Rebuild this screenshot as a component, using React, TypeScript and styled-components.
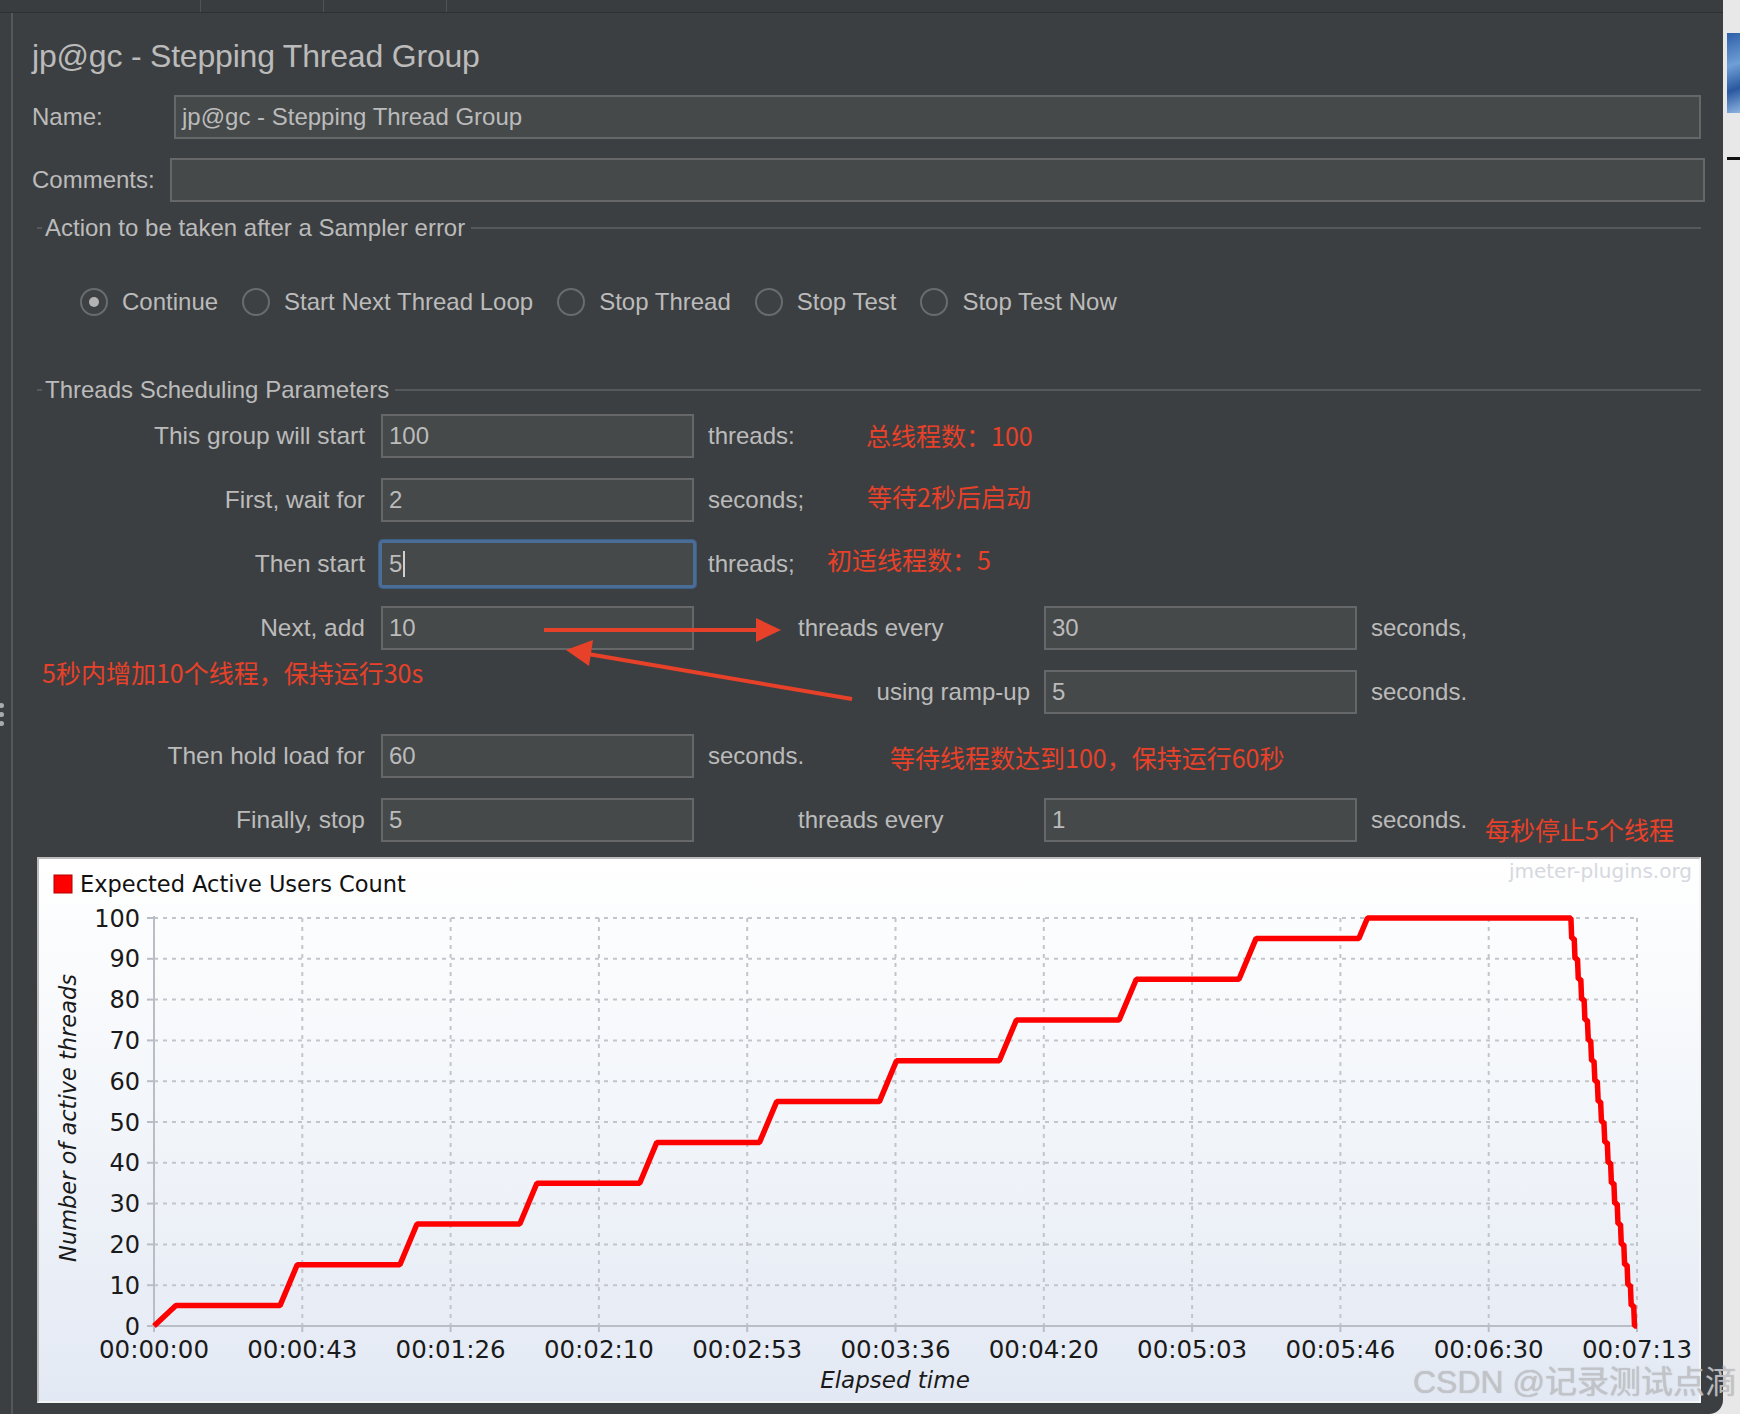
import React from 'react';
import styled, { createGlobalStyle } from 'styled-components';

const GlobalStyle = createGlobalStyle`
  html, body {
    margin: 0;
    padding: 0;
    background: #e8e8e8;
  }
  body {
    font-family: "Liberation Sans", Arial, "Noto Sans CJK SC", sans-serif;
  }
`;

const TEXT = '#bbbbbb';
const RED = '#e8412a';

// ---------- chart geometry (inside the chart panel border) ----------
const X0 = 115;
const X1 = 1598;
const Y0 = 467;
const Y100 = 59;
const T_END = 433;
const tx = (t: number) => X0 + (t / T_END) * (X1 - X0);
const vy = (v: number) => Y0 - (v / 100) * (Y0 - Y100);

const xLabels = [
  '00:00:00', '00:00:43', '00:01:26', '00:02:10', '00:02:53', '00:03:36',
  '00:04:20', '00:05:03', '00:05:46', '00:06:30', '00:07:13',
];

const buildSeries = () => {
  const pts: [number, number][] = [[0, 0], [6.4, 5]];
  let v = 5;
  for (let k = 0; k < 9; k++) {
    const s = 36.8 + 35 * k;
    pts.push([s, v]);
    v += 10;
    pts.push([s + 5, v]);
  }
  pts.push([351.8, 95], [354.3, 100], [413.7, 100]);
  const dt = (433 - 413.7) / 20;
  for (let i = 0; i < 20; i++) {
    const t = 413.7 + i * dt;
    pts.push([t, 100 - 5 * i], [t + dt * 0.25, 100 - 5 * (i + 1)]);
  }
  pts.push([433, 0]);
  return pts.map(([t, val]) => `${tx(t).toFixed(1)},${vy(val).toFixed(1)}`).join(' ');
};

// ---------- layout ----------
const Page = styled.div`
  position: relative;
  width: 1740px;
  height: 1414px;
  display: flex;
  overflow: hidden;
  background: #e8e8e8;
`;

const DarkWindow = styled.div`
  width: 1723px;
  display: flex;
  flex-direction: column;
  background: #3c3f41;
  border-bottom-right-radius: 14px;
`;

const TopBar = styled.div`
  height: 12px;
  display: flex;
  background: #3a3d40;
  border-bottom: 1px solid #2e3033;
`;

const Tab = styled.div<{ $w: number }>`
  width: ${(p) => p.$w}px;
  border-right: 1px solid #505356;
`;

const Body = styled.div`
  flex: 1;
  display: flex;
`;

const LeftStrip = styled.div`
  width: 11px;
  border-right: 2px solid #55585b;
  display: flex;
  flex-direction: column;
  align-items: flex-start;
`;

const Handle = styled.div`
  margin-top: 690px;
  margin-left: -1px;
  display: flex;
  flex-direction: column;
  gap: 4px;
  span {
    width: 5px;
    height: 5px;
    border-radius: 50%;
    background: #a9abae;
  }
`;

const Content = styled.div`
  flex: 1;
  display: flex;
  flex-direction: column;
  padding: 24px 22px 0 19px;
  color: ${TEXT};
  font-size: 24px;
`;

const Title = styled.div`
  font-size: 32px;
  line-height: 38px;
  height: 38px;
  letter-spacing: -0.2px;
`;

const FieldRow = styled.div<{ $gap: number; $labelW: number; $overhang?: number }>`
  display: flex;
  align-items: center;
  margin-top: ${(p) => p.$gap}px;
  margin-right: ${(p) => -(p.$overhang ?? 0)}px;
  & > label {
    width: ${(p) => p.$labelW}px;
    flex: none;
  }
`;

const Field = styled.div<{ $focused?: boolean }>`
  box-sizing: border-box;
  height: 44px;
  flex: 1;
  display: flex;
  align-items: center;
  padding-left: 6px;
  background: #45494a;
  border: 2px solid #656769;
  color: ${TEXT};
  font-size: 24px;
  white-space: nowrap;
  ${(p) =>
    p.$focused &&
    `
    margin: -2px;
    height: 48px;
    border: 3px solid #4a6d97;
    border-radius: 4px;
    box-shadow: 0 0 0 1px #3f5f85;
    padding-left: 7px;
  `}
`;

const Caret = styled.span`
  display: inline-block;
  width: 2px;
  height: 26px;
  margin-left: 1px;
  background: #d0d0d0;
`;

const SectionTitle = styled.div<{ $gap: number }>`
  display: flex;
  align-items: center;
  margin-top: ${(p) => p.$gap}px;
  margin-left: 5px;
  line-height: 28px;
  height: 28px;
  &::before {
    content: '';
    width: 5px;
    height: 2px;
    margin-right: 3px;
    background: #56595c;
  }
  &::after {
    content: '';
    flex: 1;
    height: 2px;
    margin-left: 6px;
    background: #56595c;
  }
`;

const RadioGroup = styled.div`
  display: flex;
  align-items: center;
  gap: 24px;
  height: 30px;
  margin-top: 45px;
  padding-left: 48px;
`;

const RadioItem = styled.div`
  display: flex;
  align-items: center;
  gap: 14px;
`;

const RadioCircle = styled.span<{ $checked?: boolean }>`
  box-sizing: border-box;
  width: 28px;
  height: 28px;
  border-radius: 50%;
  border: 2px solid #696c6f;
  background: #3e4143;
  display: flex;
  align-items: center;
  justify-content: center;
  &::after {
    content: '';
    display: ${(p) => (p.$checked ? 'block' : 'none')};
    width: 10px;
    height: 10px;
    border-radius: 50%;
    background: #b3b3b3;
  }
`;

const ScheduleGrid = styled.div`
  display: grid;
  grid-template-columns: 349px 313px 104px 246px 313px auto;
  grid-auto-rows: 44px;
  row-gap: 20px;
  margin-top: 10px;
  align-items: center;
`;

const RowLabel = styled.div`
  text-align: right;
  padding-right: 16px;
  white-space: nowrap;
  font-size: 24.5px;
`;

const Unit = styled.div`
  padding-left: 14px;
  white-space: nowrap;
`;

const MidLabel = styled.div<{ $align: 'left' | 'right' }>`
  text-align: ${(p) => p.$align};
  padding-right: ${(p) => (p.$align === 'right' ? 14 : 0)}px;
  white-space: nowrap;
`;

const ChartPanel = styled.div`
  position: relative;
  flex: none;
  width: 1664px;
  height: 546px;
  margin-top: 15px;
  margin-left: 5px;
  box-sizing: border-box;
  border: 2px solid #bcbcbc;
  border-right-color: #f4f4f4;
  border-bottom-color: #f4f4f4;
  background: linear-gradient(180deg, #ffffff 0%, #f3f6fa 45%, #e3e9f4 100%);
  svg {
    display: block;
  }
`;

const RightStrip = styled.div`
  flex: 1;
  display: flex;
  flex-direction: column;
  padding-top: 33px;
  padding-left: 4px;
`;

const Thumb = styled.div`
  height: 80px;
  background: linear-gradient(160deg, #2d5fa8 0%, #6f9fd6 40%, #2a58a0 70%, #8cb4e0 100%);
`;

const StripRule = styled.div`
  margin-top: 44px;
  height: 3px;
  background: #111;
`;

const Note = styled.span<{ $x: number; $y: number }>`
  position: absolute;
  left: ${(p) => p.$x}px;
  top: ${(p) => p.$y - 16}px;
  line-height: 32px;
  font-family: "Noto Sans CJK SC", "Liberation Sans", sans-serif;
  font-size: 25px;
  color: ${RED};
  white-space: nowrap;
  pointer-events: none;
`;

const ArrowLayer = styled.svg`
  position: absolute;
  left: 0;
  top: 0;
  pointer-events: none;
`;

const Watermark = styled.span`
  position: absolute;
  right: 3px;
  bottom: 12px;
  font-family: "Liberation Sans", "Noto Sans CJK SC", sans-serif;
  font-size: 32px;
  color: rgba(196, 198, 202, 0.9);
  text-shadow: 0 0 1px rgba(120, 120, 120, 0.5);
  white-space: nowrap;
  pointer-events: none;
`;

const radios = ['Continue', 'Start Next Thread Loop', 'Stop Thread', 'Stop Test', 'Stop Test Now'];

type Row = {
  label?: string;
  value?: string;
  focused?: boolean;
  unit?: string;
  mid?: string;
  midAlign?: 'left' | 'right';
  value2?: string;
  unit2?: string;
};

const rows: Row[] = [
  { label: 'This group will start', value: '100', unit: 'threads:' },
  { label: 'First, wait for', value: '2', unit: 'seconds;' },
  { label: 'Then start', value: '5', focused: true, unit: 'threads;' },
  { label: 'Next, add', value: '10', mid: 'threads every', midAlign: 'left', value2: '30', unit2: 'seconds,' },
  { mid: 'using ramp-up', midAlign: 'right', value2: '5', unit2: 'seconds.' },
  { label: 'Then hold load for', value: '60', unit: 'seconds.' },
  { label: 'Finally, stop', value: '5', mid: 'threads every', midAlign: 'left', value2: '1', unit2: 'seconds.' },
];

const notes = [
  { x: 866, y: 435, text: '总线程数：100' },
  { x: 867, y: 496, text: '等待2秒后启动' },
  { x: 827, y: 559, text: '初适线程数：5' },
  { x: 42, y: 672, text: '5秒内增加10个线程，保持运行30s' },
  { x: 890, y: 757, text: '等待线程数达到100，保持运行60秒' },
  { x: 1485, y: 829, text: '每秒停止5个线程' },
];

const Chart = () => {
  const series = buildSeries();
  const chartFont = '"DejaVu Sans", Verdana, sans-serif';
  return (
    <svg width={1660} height={542} viewBox="0 0 1660 542">
      <rect x={15} y={16} width={18} height={18} fill="#ff0000" stroke="#b00000" strokeWidth={1} />
      <text x={41} y={33} fontFamily={chartFont} fontSize={22.5} fill="#111">
        Expected Active Users Count
      </text>
      <text x={1653} y={19} textAnchor="end" fontFamily={chartFont} fontSize={20} fill="#d5d8de">
        jmeter-plugins.org
      </text>

      {Array.from({ length: 10 }, (_, i) => (i + 1) * 10).map((v) => (
        <line key={`h${v}`} x1={X0} x2={X1} y1={vy(v)} y2={vy(v)} stroke="#c2c5cc" strokeWidth={2} strokeDasharray="4 5" />
      ))}
      {xLabels.map((_, i) =>
        i === 0 ? null : (
          <line
            key={`v${i}`}
            x1={tx(i * 43.3)}
            x2={tx(i * 43.3)}
            y1={Y100}
            y2={Y0}
            stroke="#c2c5cc"
            strokeWidth={2}
            strokeDasharray="4 5"
          />
        ),
      )}

      <line x1={X0} x2={X0} y1={Y100 - 2} y2={Y0} stroke="#b9bdc5" strokeWidth={2} />
      <line x1={X0} x2={X1} y1={Y0} y2={Y0} stroke="#b9bdc5" strokeWidth={2} />
      {Array.from({ length: 11 }, (_, i) => i * 10).map((v) => (
        <g key={`y${v}`}>
          <line x1={X0 - 7} x2={X0} y1={vy(v)} y2={vy(v)} stroke="#b9bdc5" strokeWidth={2} />
          <text x={101} y={vy(v) + 8.5} textAnchor="end" fontFamily={chartFont} fontSize={24} fill="#1a1a1a">
            {v}
          </text>
        </g>
      ))}
      {xLabels.map((l, i) => (
        <g key={l}>
          <line x1={tx(i * 43.3)} x2={tx(i * 43.3)} y1={Y0} y2={Y0 + 6} stroke="#b9bdc5" strokeWidth={2} />
          <text x={tx(i * 43.3)} y={499} textAnchor="middle" fontFamily={chartFont} fontSize={24.5} fill="#1a1a1a">
            {l}
          </text>
        </g>
      ))}
      <text x={856} y={529} textAnchor="middle" fontFamily={chartFont} fontStyle="italic" fontSize={23} fill="#1a1a1a">
        Elapsed time
      </text>
      <text
        x={0}
        y={0}
        transform="translate(37 259) rotate(-90)"
        textAnchor="middle"
        fontFamily={chartFont}
        fontStyle="italic"
        fontSize={22.5}
        fill="#1a1a1a"
      >
        Number of active threads
      </text>

      <polyline points={series} fill="none" stroke="#ff0000" strokeWidth={5.5} strokeLinejoin="bevel" />
    </svg>
  );
};

const App = () => {
  return (
    <Page>
      <GlobalStyle />
      <DarkWindow>
        <TopBar>
          <Tab $w={200} />
          <Tab $w={122} />
          <Tab $w={122} />
        </TopBar>
        <Body>
          <LeftStrip>
            <Handle>
              <span />
              <span />
              <span />
            </Handle>
          </LeftStrip>
          <Content>
            <Title>jp@gc - Stepping Thread Group</Title>
            <FieldRow $gap={20} $labelW={142}>
              <label>Name:</label>
              <Field>jp@gc - Stepping Thread Group</Field>
            </FieldRow>
            <FieldRow $gap={19} $labelW={138} $overhang={4}>
              <label>Comments:</label>
              <Field />
            </FieldRow>

            <SectionTitle $gap={12}>Action to be taken after a Sampler error</SectionTitle>
            <RadioGroup>
              {radios.map((r, i) => (
                <RadioItem key={r}>
                  <RadioCircle $checked={i === 0} />
                  {r}
                </RadioItem>
              ))}
            </RadioGroup>

            <SectionTitle $gap={59}>Threads Scheduling Parameters</SectionTitle>
            <ScheduleGrid>
              {rows.map((r, i) => (
                <React.Fragment key={i}>
                  <RowLabel>{r.label}</RowLabel>
                  {r.value !== undefined ? (
                    <Field $focused={r.focused}>
                      {r.value}
                      {r.focused && <Caret />}
                    </Field>
                  ) : (
                    <div />
                  )}
                  <Unit>{r.unit}</Unit>
                  <MidLabel $align={r.midAlign ?? 'left'}>{r.mid}</MidLabel>
                  {r.value2 !== undefined ? <Field>{r.value2}</Field> : <div />}
                  <Unit>{r.unit2}</Unit>
                </React.Fragment>
              ))}
            </ScheduleGrid>

            <ChartPanel>
              <Chart />
            </ChartPanel>
          </Content>
        </Body>
      </DarkWindow>
      <RightStrip>
        <Thumb />
        <StripRule />
      </RightStrip>

      {notes.map((n) => (
        <Note key={n.text} $x={n.x} $y={n.y}>
          {n.text}
        </Note>
      ))}
      <ArrowLayer width={1740} height={1414} viewBox="0 0 1740 1414">
        <line x1={544} y1={630} x2={758} y2={630} stroke={RED} strokeWidth={4} />
        <polygon points="781,630 756,618 756,642" fill={RED} />
        <line x1={852} y1={699} x2={588} y2={654} stroke={RED} strokeWidth={4} />
        <polygon points="566,650 593,640 589,666" fill={RED} />
      </ArrowLayer>
      <Watermark>CSDN @记录测试点滴</Watermark>
    </Page>
  );
};

export default App;
